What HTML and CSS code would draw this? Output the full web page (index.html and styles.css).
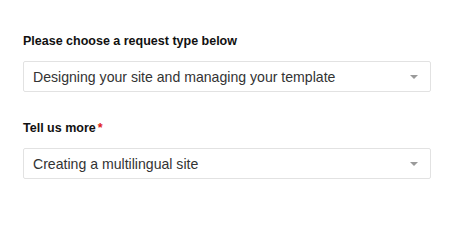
FILE: index.html
```html
<!DOCTYPE html>
<html lang="en">
<head>
    <meta charset="UTF-8">
    <meta name="viewport" content="width=device-width, initial-scale=1.0">
    <title>Request form</title>
    <link rel="stylesheet" href="styles.css">
</head>
<body>
    <form class="form">
        <div class="field">
            <label class="label" for="requestType">Please choose a request type below</label>
            <div class="select">
                <span class="value">Designing your site and managing your template</span>
                <svg class="arrow" width="8" height="4" viewBox="0 0 8 4"><path d="M0 0h8L4 4z" fill="#9a9a9a"/></svg>
            </div>
        </div>
        <div class="field">
            <label class="label" for="moreInfo">Tell us more<span class="req">*</span></label>
            <div class="select">
                <span class="value">Creating a multilingual site</span>
                <svg class="arrow" width="8" height="4" viewBox="0 0 8 4"><path d="M0 0h8L4 4z" fill="#9a9a9a"/></svg>
            </div>
        </div>
    </form>
</body>
</html>
```

FILE: styles.css
```css
body {
    margin: 0;
    background-color: #ffffff;
    font-family: "Liberation Sans", Arial, sans-serif;
    color: #1a1a1a;
}

.form {
    width: 408px;
    padding: 33px 0 0 23px;
}

.field {
    margin-bottom: 28px;
}

.label {
    display: block;
    font-size: 12.5px;
    font-weight: 700;
    color: #111111;
    margin-bottom: 12px;
    line-height: 16px;
}

.req {
    color: #e02020;
    margin-left: 2px;
}

.select {
    display: flex;
    align-items: center;
    justify-content: space-between;
    height: 29px;
    padding: 0 12px 0 9px;
    border: 1px solid #e2e2e2;
    border-radius: 2px;
}

.value {
    font-size: 14.1px;
    color: #333333;
}

.arrow {
    display: block;
}
```
